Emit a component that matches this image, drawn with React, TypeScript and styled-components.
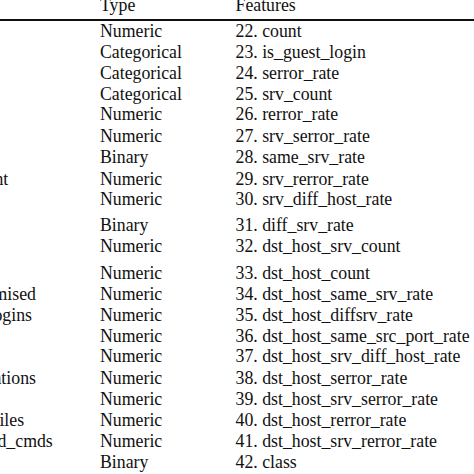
import styled, { createGlobalStyle } from 'styled-components'

const GlobalStyle = createGlobalStyle`
  html, body {
    margin: 0;
    padding: 0;
    background: #ffffff;
    overflow: hidden;
  }
`

// the reference is a crop of a wider table, so the sheet starts off-screen
const Sheet = styled.div`
  margin: -5.36px 0 0 -128px;
  font-family: "Liberation Serif", "Times New Roman", serif;
  font-size: 17.8px;
  line-height: 20.7px;
  color: #111;
`

const Row = styled.div<{ $pad?: number }>`
  display: grid;
  grid-template-columns: 228px 135.5px 1fr;
  padding-top: ${p => p.$pad ?? 0}px;
  white-space: nowrap;
`

const HeadRow = styled(Row)`
  padding-bottom: 3.3px;
  border-bottom: 2px solid #111;
`

const Cell = styled.div`
  overflow: visible;
`

type Entry = { left: string; type: string; right: string; pad?: number }

const rows: Entry[] = [
  { left: 'su_attempted', type: 'Numeric', right: 'count' },
  { left: 'protocol_type', type: 'Categorical', right: 'is_guest_login', pad: 0.6 },
  { left: 'service', type: 'Categorical', right: 'serror_rate', pad: 0.3 },
  { left: 'flag', type: 'Categorical', right: 'srv_count' },
  { left: 'src_bytes', type: 'Numeric', right: 'rerror_rate' },
  { left: 'dst_bytes', type: 'Numeric', right: 'srv_serror_rate', pad: 1.3 },
  { left: 'land', type: 'Binary', right: 'same_srv_rate' },
  { left: 'wrong_fragment', type: 'Numeric', right: 'srv_rerror_rate', pad: 1 },
  { left: 'duration', type: 'Numeric', right: 'srv_diff_host_rate' },
  { left: 'logged_in', type: 'Binary', right: 'diff_srv_rate', pad: 5.3 },
  { left: 'hot', type: 'Numeric', right: 'dst_host_srv_count' },
  { left: 'root_shell', type: 'Numeric', right: 'dst_host_count', pad: 6.6 },
  { left: 'num_compromised', type: 'Numeric', right: 'dst_host_same_srv_rate' },
  { left: 'num_failed_logins', type: 'Numeric', right: 'dst_host_diffsrv_rate' },
  { left: 'num_root', type: 'Numeric', right: 'dst_host_same_src_port_rate' },
  { left: 'num_shells', type: 'Numeric', right: 'dst_host_srv_diff_host_rate' },
  { left: 'num_file_creations', type: 'Numeric', right: 'dst_host_serror_rate', pad: 1.3 },
  { left: 'urgent', type: 'Numeric', right: 'dst_host_srv_serror_rate' },
  { left: 'num_access_files', type: 'Numeric', right: 'dst_host_rerror_rate', pad: 0.6 },
  { left: 'num_outbound_cmds', type: 'Numeric', right: 'dst_host_srv_rerror_rate' },
  { left: 'is_host_login', type: 'Binary', right: 'class' },
]

export default function App() {
  return (
    <>
      <GlobalStyle />
      <Sheet>
        <HeadRow>
          <Cell>Features</Cell>
          <Cell>Type</Cell>
          <Cell>Features</Cell>
        </HeadRow>
        {rows.map((r, i) => (
          <Row key={r.right} $pad={r.pad}>
            <Cell>{i + 1}. {r.left}</Cell>
            <Cell>{r.type}</Cell>
            <Cell>{i + 22}. {r.right}</Cell>
          </Row>
        ))}
      </Sheet>
    </>
  )
}
